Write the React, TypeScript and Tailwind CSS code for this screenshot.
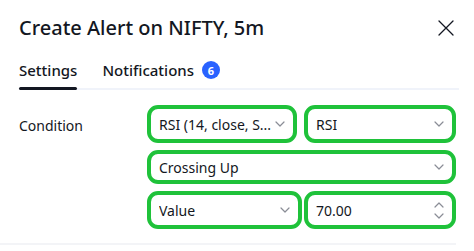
import React from "react";

const FONT = { fontFamily: '"Noto Sans", "Open Sans", sans-serif' };

function Chevron({ up = false }: { up?: boolean }) {
  return (
    <svg width="10" height="6" viewBox="0 0 10 6" className="shrink-0">
      <path d={up ? "M1 5 L5 1 L9 5" : "M1 1 L5 5 L9 1"} fill="none" stroke="#8a8d96" strokeWidth="1.2" strokeLinecap="round" strokeLinejoin="round" />
    </svg>
  );
}

function Field({ value, className = "", h = "h-[38px]", spinner = false }: { value: string; className?: string; h?: string; spinner?: boolean }) {
  return (
    <div className={`${h} ${className} flex items-center justify-between rounded-[11px] border-[4px] border-[#1fc23a] bg-white pl-[8px] pr-[8px]`}>
      <span className="truncate text-[14px] text-[#131722]">{value}</span>
      {spinner ? (
        <div className="flex flex-col items-center gap-[5px]">
          <Chevron up />
          <Chevron />
        </div>
      ) : (
        <Chevron />
      )}
    </div>
  );
}

export default function App() {
  return (
    <div className="h-[251px] w-[474px] overflow-hidden bg-white text-[#131722]" style={FONT}>
      <div className="flex items-center justify-between pl-[19px] pr-[20px] pt-[14px]">
        <div className="text-[20px] font-medium leading-[28px]">Create Alert on NIFTY, 5m</div>
        <svg width="16" height="16" viewBox="0 0 16 16">
          <path d="M1 1 L15 15 M15 1 L1 15" stroke="#131722" strokeWidth="1.3" strokeLinecap="round" />
        </svg>
      </div>

      <div className="mx-[19px] mt-[18px] mr-[15px] border-b-[2px] border-[#f0f3fa]">
        <div className="flex items-center gap-[25px]">
          <div className="relative pb-[8px] text-[15px] font-medium leading-[20px]">
            Settings
            <div className="absolute -bottom-[2px] left-0 h-[3px] w-full rounded-full bg-[#131722]" />
          </div>
          <div className="flex items-center gap-[8px] pb-[8px] text-[15px] font-medium leading-[20px]">
            Notifications
            <span className="grid h-[18px] w-[18px] place-items-center rounded-full bg-[#2962ff] text-[11px] font-bold text-white">6</span>
          </div>
        </div>
      </div>

      <div className="mt-[15px] flex pl-[19px]">
        <div className="w-[128px] pt-[10px] text-[14px]">Condition</div>
        <div className="flex w-[309px] flex-col gap-[7px]">
          <div className="flex gap-[7px]">
            <Field value="RSI (14, close, S..." className="w-[150px]" />
            <Field value="RSI" className="flex-1" />
          </div>
          <Field value="Crossing Up" h="h-[34px]" />
          <div className="flex gap-[2px]">
            <Field value="Value" className="w-[155px]" />
            <Field value="70.00" className="flex-1" spinner />
          </div>
        </div>
      </div>

      <div className="mt-[14px] mr-[18px] h-[2px] bg-[#f3f4f7]" />
    </div>
  );
}
